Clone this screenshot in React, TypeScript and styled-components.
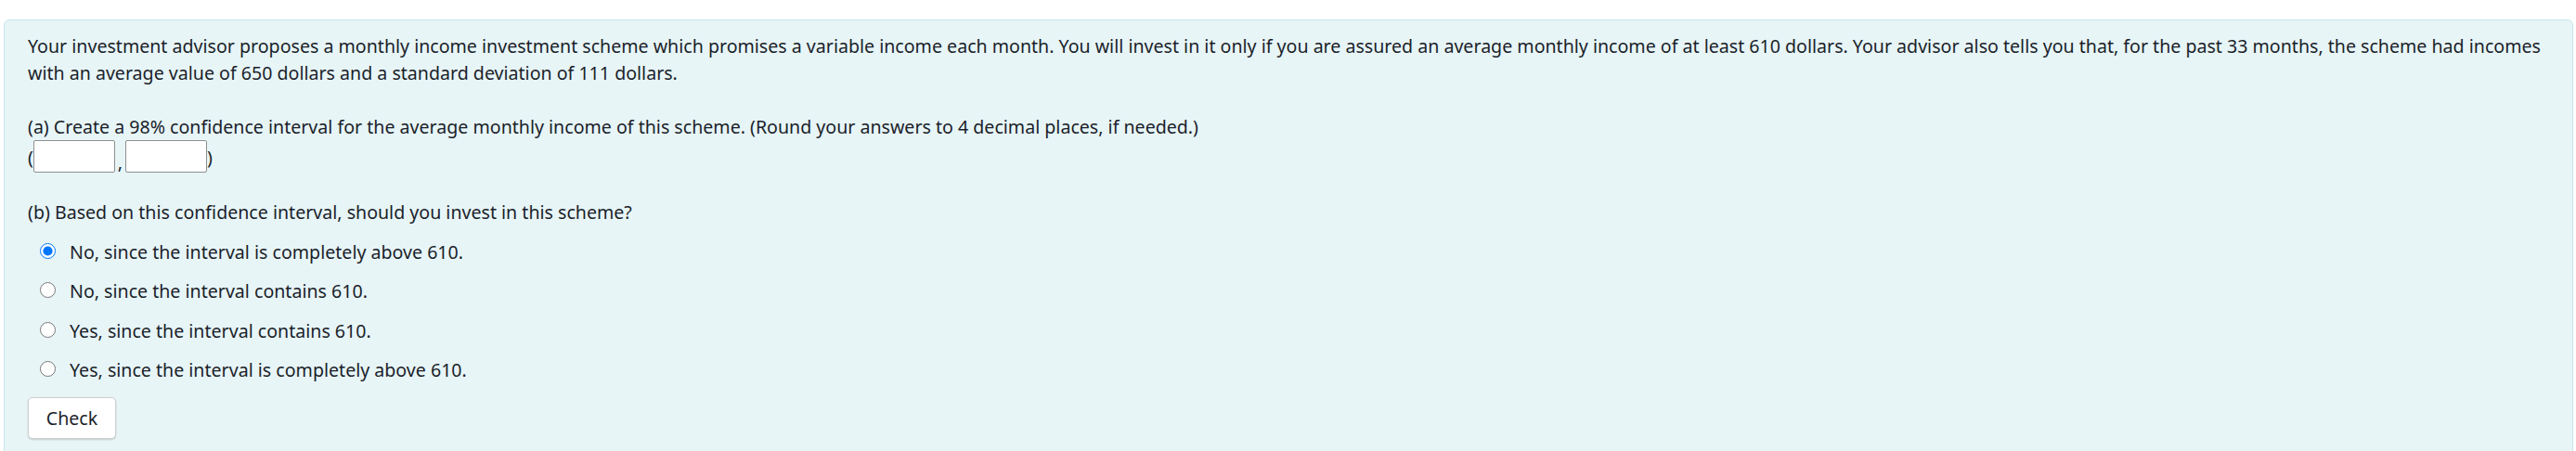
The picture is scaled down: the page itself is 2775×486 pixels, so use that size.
import styled, { createGlobalStyle } from 'styled-components';

const Global = createGlobalStyle`
  body {
    margin: 0;
    background: #fff;
    font-family: "Noto Sans", "Open Sans", sans-serif;
    font-size: 19.6px;
    line-height: 29px;
    color: #1b1f2a;
  }
`;

const Page = styled.div`
  padding: 21px 3px 0 4px;
`;

const Panel = styled.section`
  background: #e7f5f7;
  border: 1px solid #c6e6ec;
  border-radius: 6px;
  padding: 13px 30px 20px 25px;
`;

const Paragraph = styled.p`
  margin: 0 0 29px;
`;

const Prompt = styled.p`
  margin: 0;
`;

const IntervalRow = styled.div`
  display: flex;
  align-items: center;
  height: 35px;
  margin-bottom: 28px;
`;

const Bracket = styled.span`
  display: inline-block;
  line-height: 29px;
  transform: translateY(1px);
`;

const Comma = styled.span`
  display: inline-block;
  width: 11px;
  text-align: center;
  line-height: 29px;
  transform: translateY(6px);
`;

const NumberInput = styled.input`
  box-sizing: border-box;
  width: 88px;
  height: 35px;
  margin: 0;
  border: 1px solid #8f8f8f;
  border-radius: 2px;
  background: #fff;
  font: inherit;
  padding: 0 6px;
`;

const Options = styled.div`
  display: flex;
  flex-direction: column;
  margin-top: 7px;
`;

const Option = styled.label`
  display: flex;
  align-items: center;
  height: 42.5px;
  padding-left: 13px;
  gap: 15px;
  cursor: pointer;
`;

const Radio = styled.input`
  width: 17px;
  height: 17px;
  margin: 0;
  accent-color: #0075ff;
  transform: translateY(-1px);
`;

const CheckButton = styled.button`
  box-sizing: border-box;
  width: 95px;
  height: 45px;
  margin-top: 8px;
  background: #fff;
  border: 1px solid #cfcfcf;
  border-radius: 5px;
  box-shadow: 0 1px 2px rgba(0, 0, 0, 0.18);
  font: inherit;
  color: #1b1f2a;
  cursor: pointer;
`;

const choices = [
  'No, since the interval is completely above 610.',
  'No, since the interval contains 610.',
  'Yes, since the interval contains 610.',
  'Yes, since the interval is completely above 610.',
];

export default function App() {
  return (
    <>
      <Global />
      <Page>
        <Panel>
          <Paragraph>
            Your investment advisor proposes a monthly income investment scheme which promises a variable income each
            month. You will invest in it only if you are assured an average monthly income of at least 610 dollars.
            Your advisor also tells you that, for the past 33 months, the scheme had incomes with an average value of
            650 dollars and a standard deviation of 111 dollars.
          </Paragraph>
          <Prompt>
            (a) Create a 98% confidence interval for the average monthly income of this scheme. (Round your answers to
            4 decimal places, if needed.)
          </Prompt>
          <IntervalRow>
            <Bracket>(</Bracket>
            <NumberInput type="text" />
            <Comma>,</Comma>
            <NumberInput type="text" />
            <Bracket>)</Bracket>
          </IntervalRow>
          <Prompt>(b) Based on this confidence interval, should you invest in this scheme?</Prompt>
          <Options>
            {choices.map((c, i) => (
              <Option key={c}>
                <Radio type="radio" name="invest" defaultChecked={i === 0} />
                {c}
              </Option>
            ))}
          </Options>
          <CheckButton type="button">Check</CheckButton>
        </Panel>
      </Page>
    </>
  );
}
